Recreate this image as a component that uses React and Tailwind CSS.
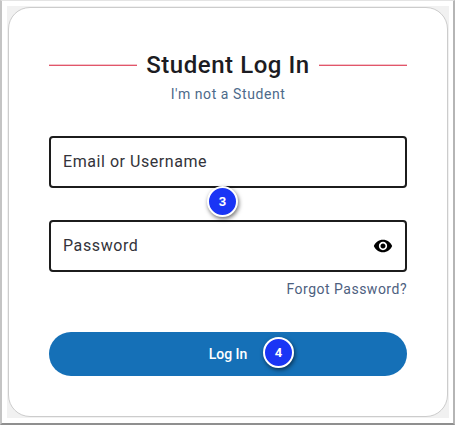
import React from "react";
import { MdVisibility } from "react-icons/md";

function Badge({ n, className }) {
  return (
    <div className={"absolute flex h-[31px] w-[31px] items-center justify-center rounded-full border-2 border-white bg-[#1a35f5] text-[13px] font-bold text-white shadow-[1px_2px_4px_rgba(0,0,0,0.55)] " + className}>
      {n}
    </div>
  );
}

export default function App() {
  return (
    <div className="h-[426px] w-[456px] bg-white font-['Roboto',sans-serif]">
      <div className="h-[425px] w-[455px] border-b-2 border-l-2 border-r-2 border-t border-b-[#8f8f8f] border-l-[#c4c4c4] border-r-[#b5b5b5] border-t-[#e4e4e4] bg-white pl-[5px] pt-[5px]">
        <div className="w-[442px] bg-[#f1f1f1] p-px">
          <div className="relative flex h-[410px] w-[440px] flex-col rounded-[22px] border border-[#cccccc] bg-white px-10 pt-[42px]">
            <div className="flex items-center justify-between">
              <div className="h-[2px] w-[88px] border-t border-[#f3c3ca] bg-[#e2566a]" />
              <h1 className="text-[24px] font-medium leading-[30px] tracking-[0.55px] text-[#1c1c22]">Student Log In</h1>
              <div className="h-[2px] w-[88px] border-t border-[#f3c3ca] bg-[#e2566a]" />
            </div>
            <p className="mt-[4px] text-center text-[14px] leading-[20px] tracking-[0.57px] text-[#4d6a8a]">I'm not a Student</p>
            <div className="mt-[32px] flex h-[52px] items-center rounded-[4px] border-2 border-[#1c1c1c] px-[12px] text-[16px] tracking-[0.55px] text-[#33333a]">
              Email or Username
            </div>
            <div className="mt-[32px] flex h-[52px] items-center justify-between rounded-[4px] border-2 border-[#1c1c1c] pl-[12px] pr-[12px] text-[16px] tracking-[0.6px] text-[#33333a]">
              <span>Password</span>
              <MdVisibility className="text-[20px] text-black" />
            </div>
            <a className="mt-[7px] self-end text-[14px] leading-[20px] tracking-[0.5px] text-[#4d6080]">Forgot Password?</a>
            <button className="mt-[33px] flex h-[44px] items-center justify-center rounded-full bg-[#1570b7] text-[14px] font-medium text-white">
              Log In
            </button>
            <Badge n="3" className="left-[198px] top-[178px]" />
            <Badge n="4" className="left-[254px] top-[329px]" />
          </div>
        </div>
      </div>
    </div>
  );
}
